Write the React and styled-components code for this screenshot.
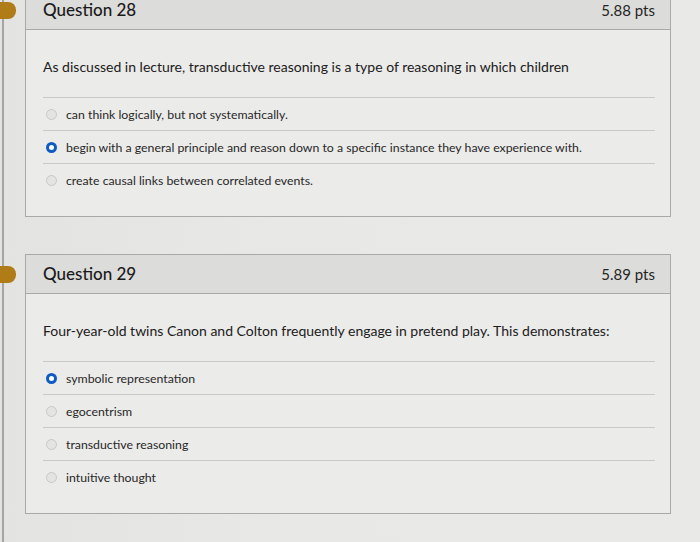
import React from "react";
import styled, { createGlobalStyle } from "styled-components";

const GlobalStyle = createGlobalStyle`
  html, body {
    margin: 0;
    padding: 0;
    background: #e6e6e4;
  }
  body {
    font-family: Lato, "Open Sans", "Liberation Sans", sans-serif;
    color: #2b2b2b;
  }
`;

const questions = [
  {
    id: 28,
    points: "5.88 pts",
    text: "As discussed in lecture, transductive reasoning is a type of reasoning in which children",
    answers: [
      "can think logically, but not systematically.",
      "begin with a general principle and reason down to a specific instance they have experience with.",
      "create causal links between correlated events.",
    ],
    selected: 1,
  },
  {
    id: 29,
    points: "5.89 pts",
    text: "Four-year-old twins Canon and Colton frequently engage in pretend play. This demonstrates:",
    answers: [
      "symbolic representation",
      "egocentrism",
      "transductive reasoning",
      "intuitive thought",
    ],
    selected: 0,
  },
];

function App() {
  return (
    <Page>
      <GlobalStyle />
      <EdgeLine />
      <List>
        {questions.map((q) => (
          <Card key={q.id}>
            <Flag />
            <Header>
              <Title>Question {q.id}</Title>
              <Points>{q.points}</Points>
            </Header>
            <Body>
              <QuestionText>{q.text}</QuestionText>
              <Answers>
                {q.answers.map((a, i) => (
                  <Answer key={a}>
                    <Radio checked={i === q.selected} />
                    <AnswerText>{a}</AnswerText>
                  </Answer>
                ))}
              </Answers>
            </Body>
          </Card>
        ))}
      </List>
    </Page>
  );
}

const Page = styled.div`
  position: relative;
  width: 700px;
  height: 542px;
  overflow: hidden;
  background: linear-gradient(90deg, #e3e3e1 0%, #e8e8e6 40%, #e9e9e7 100%);
`;

const EdgeLine = styled.div`
  position: absolute;
  left: 2px;
  top: 0;
  bottom: 0;
  width: 2px;
  background: #a4a4a2;
`;

const List = styled.div`
  display: flex;
  flex-direction: column;
  gap: 37px;
  margin: -10px 29px 0 25px;
`;

const Card = styled.section`
  position: relative;
  border: 1px solid #a9a9a7;
  background: #ebebe9;
`;

const Flag = styled.div`
  position: absolute;
  left: -26px;
  top: 11px;
  width: 16px;
  height: 17px;
  background: #b07c17;
  border-radius: 0 8px 8px 0;
`;

const Header = styled.div`
  display: flex;
  align-items: center;
  justify-content: space-between;
  height: 38px;
  padding: 0 15px 0 17px;
  background: #dcdcda;
  border-bottom: 1px solid #a9a9a7;
`;

const Title = styled.h2`
  margin: 0;
  font-size: 17px;
  line-height: 18px;
  font-weight: 500;
  color: #1a1a1a;
`;

const Points = styled.span`
  font-size: 15px;
  line-height: 18px;
  color: #262626;
`;

const Body = styled.div`
  padding: 27px 15px 20px 17px;
`;

const QuestionText = styled.p`
  margin: 0;
  font-size: 14px;
  line-height: 20px;
  color: #202020;
`;

const Answers = styled.div`
  display: flex;
  flex-direction: column;
  margin-top: 20px;
`;

const Answer = styled.div`
  display: flex;
  align-items: center;
  gap: 9px;
  height: 32px;
  padding-left: 2px;
  border-top: 1px solid #c9c9c7;
`;

const Radio = styled.span`
  box-sizing: border-box;
  width: 11px;
  height: 11px;
  margin-left: 1px;
  border-radius: 50%;
  flex: 0 0 auto;
  background: ${(p) => (p.checked ? "#fff" : "#e4e4e2")};
  border: ${(p) => (p.checked ? "3.5px solid #0f5bc4" : "1px solid #c8c8c6")};
`;

const AnswerText = styled.span`
  font-size: 12.3px;
  color: #282828;
`;

export default App;
